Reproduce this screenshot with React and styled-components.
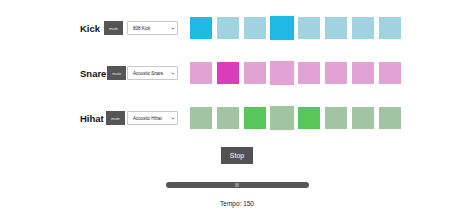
import React from 'react';
import styled, { createGlobalStyle } from 'styled-components';

const GlobalStyle = createGlobalStyle`
  html, body {
    margin: 0;
    padding: 0;
    background: #ffffff;
    font-family: "Liberation Sans", Arial, sans-serif;
  }
`;

const tracks = [
  {
    name: 'Kick',
    sample: '808 Kick',
    on: '#1fb9e3',
    off: '#a0d2e0',
    steps: [1, 0, 0, 1, 0, 0, 0, 0],
  },
  {
    name: 'Snare',
    sample: 'Acoustic Snare',
    on: '#da3dbb',
    off: '#e0a3d3',
    steps: [0, 1, 0, 0, 0, 0, 0, 0],
  },
  {
    name: 'Hihat',
    sample: 'Acoustic Hihat',
    on: '#58c65a',
    off: '#a2c4a2',
    steps: [0, 0, 1, 0, 1, 0, 0, 0],
  },
];

const currentStep = 3;

export default function App() {
  return (
    <>
      <GlobalStyle />
      <Sequencer>
        {tracks.map((track) => (
          <TrackRow key={track.name}>
            <Controls>
              <TrackName>{track.name}</TrackName>
              <MuteButton type="button">mute</MuteButton>
              <SelectWrap>
                <SampleSelect defaultValue={track.sample}>
                  <option>{track.sample}</option>
                </SampleSelect>
                <Chevron viewBox="0 0 6 4">
                  <path d="M1 1 L3 3 L5 1" fill="none" stroke="#333" strokeWidth="1" />
                </Chevron>
              </SelectWrap>
            </Controls>
            <Steps>
              {track.steps.map((active, i) => (
                <Step
                  key={i}
                  $color={active ? track.on : track.off}
                  $current={i === currentStep}
                />
              ))}
            </Steps>
          </TrackRow>
        ))}
        <StopButton type="button">Stop</StopButton>
        <TempoSlider type="range" min="60" max="240" defaultValue="150" />
        <TempoLabel>Tempo: 150</TempoLabel>
      </Sequencer>
    </>
  );
}

const Sequencer = styled.div`
  display: flex;
  flex-direction: column;
  align-items: center;
  width: 474px;
  height: 217px;
  padding-top: 17px;
  box-sizing: border-box;
`;

const TrackRow = styled.div`
  display: flex;
  align-items: center;
  gap: 12px;
  padding-left: 7px;
  margin-bottom: 23px;

  &:nth-of-type(3) {
    margin-bottom: 18px;
  }
`;

const Controls = styled.div`
  display: flex;
  align-items: center;
  justify-content: space-between;
  width: 98px;
  height: 22px;
`;

const TrackName = styled.span`
  font-size: 9.5px;
  font-weight: 700;
  color: #111;
`;

const MuteButton = styled.button`
  display: block;
  width: 19px;
  height: 14px;
  padding: 0;
  border: none;
  background: #555555;
  color: #e6e6e6;
  font-family: inherit;
  font-size: 4px;
`;

const SelectWrap = styled.div`
  position: relative;
  width: 51px;
  height: 14px;
  font-size: 0;
`;

const SampleSelect = styled.select`
  display: block;
  appearance: none;
  width: 100%;
  height: 100%;
  margin: 0;
  padding: 0 0 0 5px;
  border: 1px solid #c8c8c8;
  border-radius: 1px;
  background: #ffffff;
  color: #222;
  font-family: inherit;
  font-size: 4.5px;
  box-sizing: border-box;
`;

const Chevron = styled.svg`
  position: absolute;
  top: 5.5px;
  right: 3px;
  width: 4px;
  height: 3px;
  pointer-events: none;
`;

const Steps = styled.div`
  display: flex;
  gap: 5px;
`;

const Step = styled.div`
  width: 22px;
  height: 22px;
  background: ${(props) => props.$color};
  transform: ${(props) => (props.$current ? 'scale(1.1)' : 'none')};
`;

const StopButton = styled.button`
  width: 32px;
  height: 17px;
  padding: 0;
  border: none;
  background: #525252;
  color: #ffffff;
  font-family: inherit;
  font-size: 7px;
`;

const TempoSlider = styled.input`
  appearance: none;
  -webkit-appearance: none;
  width: 143px;
  height: 6px;
  margin: 18px 0 0;
  border-radius: 3px;
  background: #555555;
  outline: none;

  &::-webkit-slider-thumb {
    -webkit-appearance: none;
    width: 4px;
    height: 4px;
    background: #8a8a8a;
    border: none;
  }
`;

const TempoLabel = styled.div`
  margin-top: 12px;
  font-size: 6.5px;
  color: #222;
`;
